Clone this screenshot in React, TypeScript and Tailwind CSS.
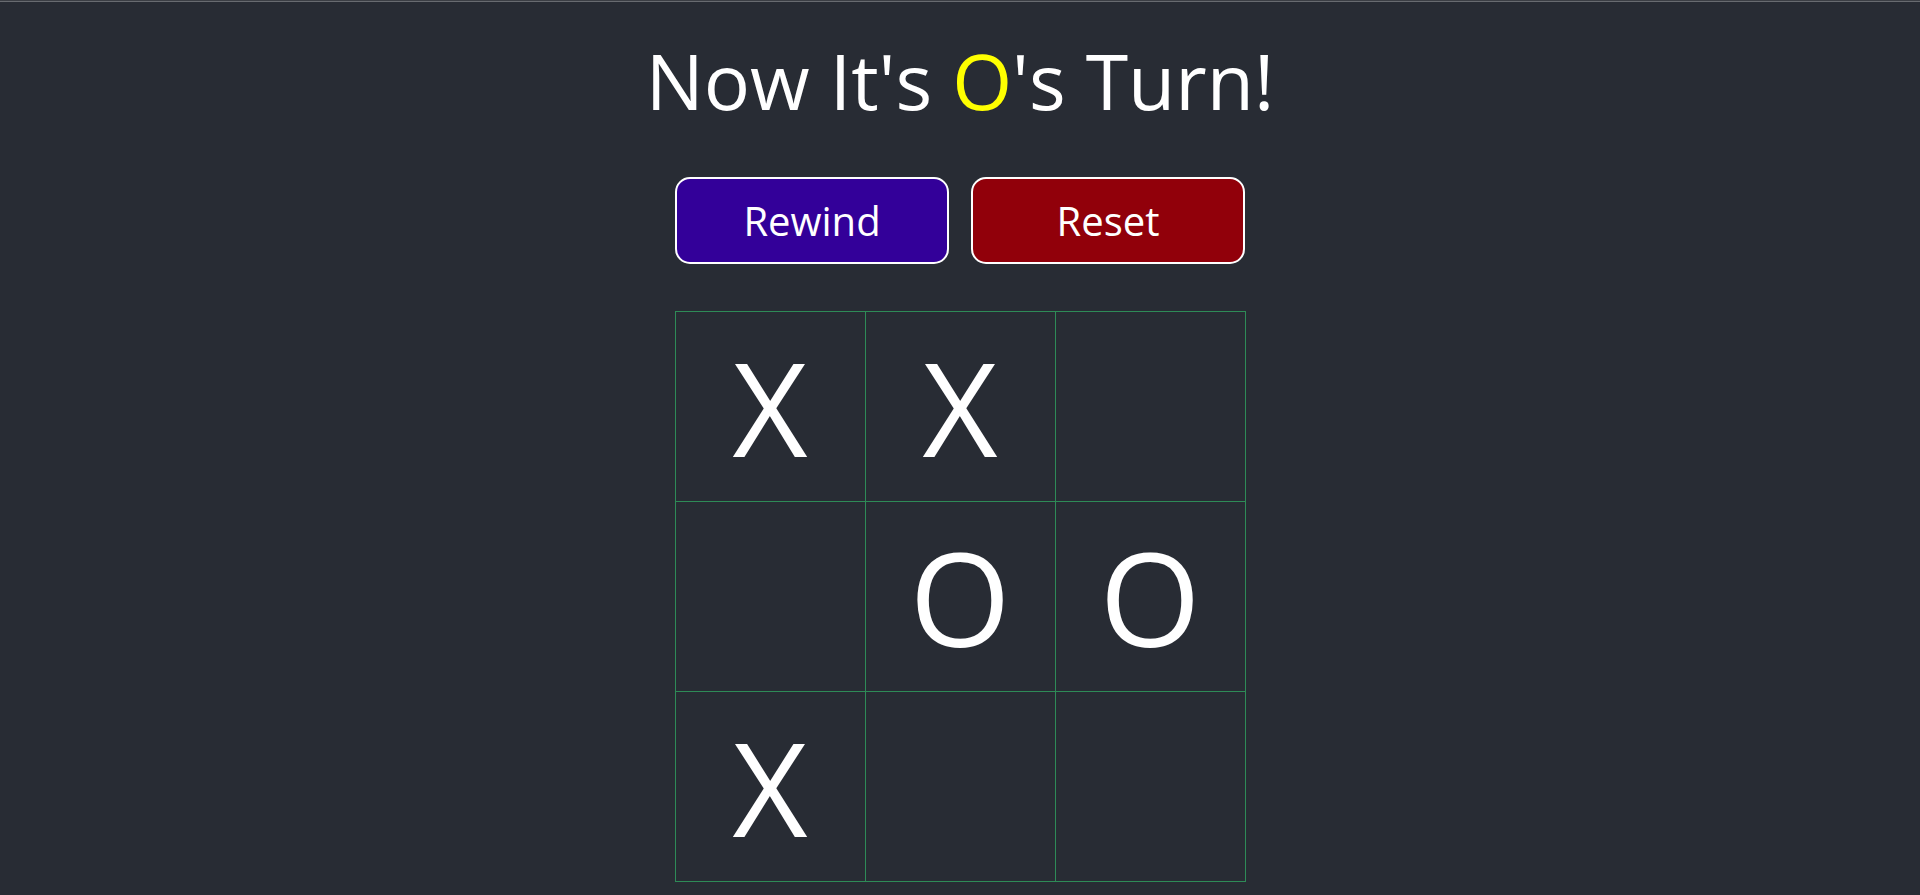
import { useState } from 'react'

type Cell = 'X' | 'O' | null

const START: Cell[] = ['X', 'X', null, null, 'O', 'O', 'X', null, null]

export default function App() {
  const [history, setHistory] = useState<Cell[][]>([START])
  const board = history[history.length - 1]
  const xs = board.filter((c) => c === 'X').length
  const os = board.filter((c) => c === 'O').length
  const turn: 'X' | 'O' = xs > os ? 'O' : 'X'

  const play = (i: number) => {
    if (board[i]) return
    const next = board.slice()
    next[i] = turn
    setHistory([...history, next])
  }

  const rewind = () => {
    if (history.length > 1) setHistory(history.slice(0, -1))
  }

  const reset = () => setHistory([Array(9).fill(null)])

  return (
    <div
      className="min-h-screen bg-[#282c34] text-white"
      style={{ fontFamily: '"Open Sans", "Noto Sans", sans-serif' }}
    >
      {/* top edge */}
      <div className="h-px bg-[#3b3e44]" />
      <div className="h-px bg-[#686b70]" />

      <div className="flex flex-col items-center">
        <h1 className="mt-[24px] text-[77px] leading-[110px] font-normal">
          Now It's <span className="text-[#ffff00]">{turn}</span>'s Turn!
        </h1>

        <div className="mt-[41px] flex gap-[22px]">
          <button
            onClick={rewind}
            className="w-[274px] h-[87px] rounded-[15px] border-2 border-white bg-[#330099] text-[40px] leading-none text-white"
          >
            Rewind
          </button>
          <button
            onClick={reset}
            className="w-[274px] h-[87px] rounded-[15px] border-2 border-white bg-[#91000a] text-[40px] leading-none text-white"
          >
            Reset
          </button>
        </div>

        <div className="mt-[47px] grid grid-cols-3 gap-px p-px bg-[#2e8b57]">
          {board.map((cell, i) => (
            <button
              key={i}
              onClick={() => play(i)}
              className="w-[189px] h-[189px] bg-[#282c34] flex items-center justify-center text-[130px] leading-none text-white"
            >
              {cell}
            </button>
          ))}
        </div>
      </div>
    </div>
  )
}
